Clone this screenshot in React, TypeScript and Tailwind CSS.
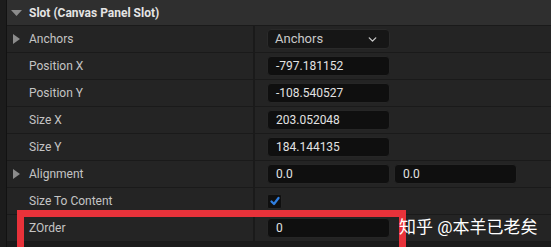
import { ChevronDown } from "lucide-react"

type Row = {
  label: string
  expandable?: boolean
  kind: "dropdown" | "input" | "pair" | "check"
  values?: string[]
}

const rows: Row[] = [
  { label: "Anchors", expandable: true, kind: "dropdown", values: ["Anchors"] },
  { label: "Position X", kind: "input", values: ["-797.181152"] },
  { label: "Position Y", kind: "input", values: ["-108.540527"] },
  { label: "Size X", kind: "input", values: ["203.052048"] },
  { label: "Size Y", kind: "input", values: ["184.144135"] },
  { label: "Alignment", expandable: true, kind: "pair", values: ["0.0", "0.0"] },
  { label: "Size To Content", kind: "check" },
  { label: "ZOrder", kind: "input", values: ["0"] },
]

function Field({ value }: { value: string }) {
  return (
    <div className="w-[123px] h-[20px] rounded-[4px] bg-[#0f0f0f] border border-[#262626] flex items-center pl-[8px] text-[12px] text-[#e2e2e2]">
      {value}
    </div>
  )
}

function Value({ row }: { row: Row }) {
  if (row.kind === "dropdown") {
    return (
      <div className="w-[123px] h-[20px] rounded-[4px] bg-[#161616] border border-[#2a2a2a] flex items-center justify-between pl-[7px] pr-[10px] text-[13px] text-[#c9c9c9]">
        <span>{row.values![0]}</span>
        <ChevronDown size={13} strokeWidth={2.5} className="text-[#c9c9c9]" />
      </div>
    )
  }
  if (row.kind === "pair") {
    return (
      <div className="flex gap-[4px]">
        <Field value={row.values![0]} />
        <Field value={row.values![1]} />
      </div>
    )
  }
  if (row.kind === "check") {
    return (
      <div className="w-[15px] h-[15px] rounded-[2px] bg-[#0f0f0f] border border-[#262626] flex items-center justify-center">
        <svg width="10" height="10" viewBox="0 0 10 10">
          <path d="M1.5 5.5 L4 8 L8.5 2" fill="none" stroke="#2f7ee0" strokeWidth="2.2" strokeLinecap="round" strokeLinejoin="round" />
        </svg>
      </div>
    )
  }
  return <Field value={row.values![0]} />
}

export default function App() {
  return (
    <div
      className="relative w-[551px] h-[247px] overflow-hidden bg-[#1b1b1b] flex"
      style={{ fontFamily: "Roboto, 'Noto Sans', 'Noto Sans CJK SC', sans-serif" }}
    >
      {/* left gutter */}
      <div className="w-[7px] shrink-0 bg-[#1c1c1c] border-r border-[#121212]" />

      <div className="flex-1 flex flex-col">
        {/* category header */}
        <div className="h-[26px] shrink-0 bg-[#2f2f2f] flex items-center pl-[4px] border-b border-[#1a1a1a]">
          <svg width="11" height="6" viewBox="0 0 11 6" className="mr-[7px]">
            <path d="M0 0 H11 L5.5 6 Z" fill="#8c8c8c" />
          </svg>
          <span className="text-[12px] font-bold text-[#e4e4e4]">Slot (Canvas Panel Slot)</span>
        </div>

        {rows.map((row) => (
          <div key={row.label} className="h-[27px] shrink-0 flex bg-[#242424] border-b border-[#1a1a1a]">
            <div className="w-[246px] shrink-0 flex items-center pl-[6px]">
              <span className="w-[16px] flex items-center">
                {row.expandable && (
                  <svg width="7" height="10" viewBox="0 0 7 10">
                    <path d="M0 0 L7 5 L0 10 Z" fill="#8c8c8c" />
                  </svg>
                )}
              </span>
              <span className="text-[12px] text-[#c4c4c4]">{row.label}</span>
            </div>
            <div className="w-[2px] shrink-0 bg-[#1a1a1a]" />
            <div className="flex-1 flex items-center pl-[12px]">
              <Value row={row} />
            </div>
          </div>
        ))}
      </div>

      {/* red highlight around ZOrder */}
      <div className="absolute left-[17px] top-[210px] w-[389px] h-[50px] border-[7px] border-[#e8323a]" />

      {/* watermark */}
      <div className="absolute left-[399px] top-[216px] text-[17px] text-white leading-[22px] whitespace-nowrap">
        知乎 @本羊已老矣
      </div>
    </div>
  )
}
